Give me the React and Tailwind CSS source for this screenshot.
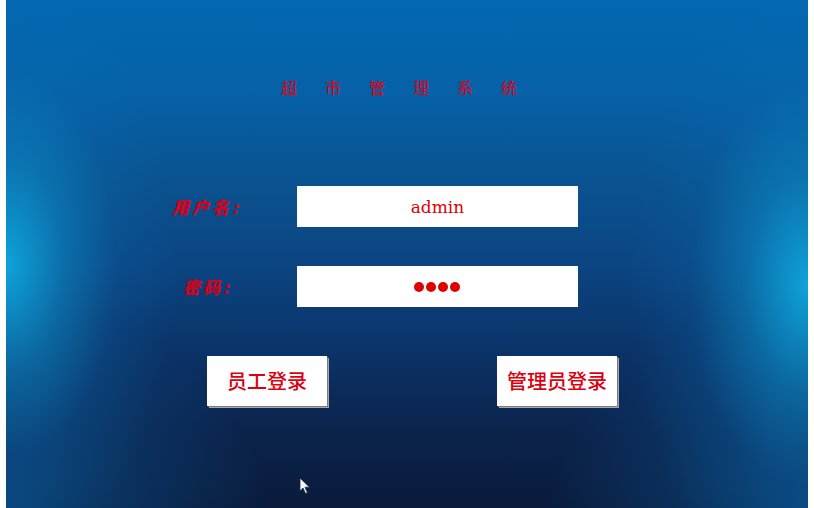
import React from 'react';

const CJK = "font-['Noto_Sans_CJK_SC',sans-serif]";

export default function App() {
  return (
    <div className="flex w-[814px] h-[508px] bg-white overflow-hidden">
      <main
        className={`relative ml-[6px] flex w-[802px] flex-col ${CJK} bg-[radial-gradient(ellipse_170px_300px_at_0%_52%,rgba(14,168,222,0.95)_0%,rgba(12,140,200,0.55)_35%,rgba(10,110,180,0.2)_65%,transparent_100%),radial-gradient(ellipse_180px_310px_at_100%_56%,rgba(14,168,222,0.95)_0%,rgba(12,140,200,0.55)_35%,rgba(10,110,180,0.2)_65%,transparent_100%),radial-gradient(ellipse_260px_200px_at_0%_100%,rgba(10,100,170,0.55),transparent),radial-gradient(ellipse_260px_200px_at_100%_100%,rgba(10,100,170,0.55),transparent),linear-gradient(to_bottom,#0268b0_0%,#0661a7_18%,#0a528f_36%,#0b4582_52%,#0b3266_70%,#0b224a_86%,#0a1b3c_100%)]`}
      >
        {/* Title */}
        <h1 className="ml-[275px] mt-[77px] text-[16px] leading-[20px] text-[#e00010] tracking-[28px] whitespace-nowrap">
          超市管理系统
        </h1>

        {/* Username */}
        <div className="mt-[89px] flex items-center">
          <label className="ml-[166px] w-[125px] text-[17px] font-black italic text-[#d80018] tracking-[3px]">
            用户名:
          </label>
          <div className="flex h-[41px] w-[281px] items-center justify-center bg-white pt-[2px] font-['DejaVu_Serif',serif] text-[17px] text-[#e00000]">
            admin
          </div>
        </div>

        {/* Password */}
        <div className="mt-[39px] flex items-center">
          <label className="ml-[177px] w-[114px] text-[17px] font-black italic text-[#d80018] tracking-[3px]">
            密码:
          </label>
          <div className="flex h-[41px] w-[281px] items-center justify-center gap-[2px] bg-white pr-[2px]">
            <span className="h-[10px] w-[10px] rounded-full bg-[#e00000]" />
            <span className="h-[10px] w-[10px] rounded-full bg-[#e00000]" />
            <span className="h-[10px] w-[10px] rounded-full bg-[#e00000]" />
            <span className="h-[10px] w-[10px] rounded-full bg-[#e00000]" />
          </div>
        </div>

        {/* Buttons */}
        <div className="mt-[49px] flex">
          <button className="ml-[201px] flex h-[50px] w-[120px] items-center justify-center bg-white text-[20px] font-medium text-[#dd0010] shadow-[1px_1px_0_#7a7a7a,2px_2px_0_#a8a8a8]">
            员工登录
          </button>
          <button className="ml-[170px] flex h-[50px] w-[120px] items-center justify-center bg-white text-[20px] font-medium text-[#dd0010] shadow-[1px_1px_0_#7a7a7a,2px_2px_0_#a8a8a8]">
            管理员登录
          </button>
        </div>

        {/* Mouse cursor */}
        <svg className="absolute left-[293px] top-[477px]" width="12" height="18" viewBox="0 0 12 18">
          <path d="M1 1 L1 14 L4 11 L6.5 16.5 L8.5 15.6 L6 10.2 L10.5 10.2 Z" fill="#f2f4f8" stroke="#1a2a44" strokeWidth="0.8" />
        </svg>
      </main>
      <div className="flex-1 bg-white" />
    </div>
  );
}
